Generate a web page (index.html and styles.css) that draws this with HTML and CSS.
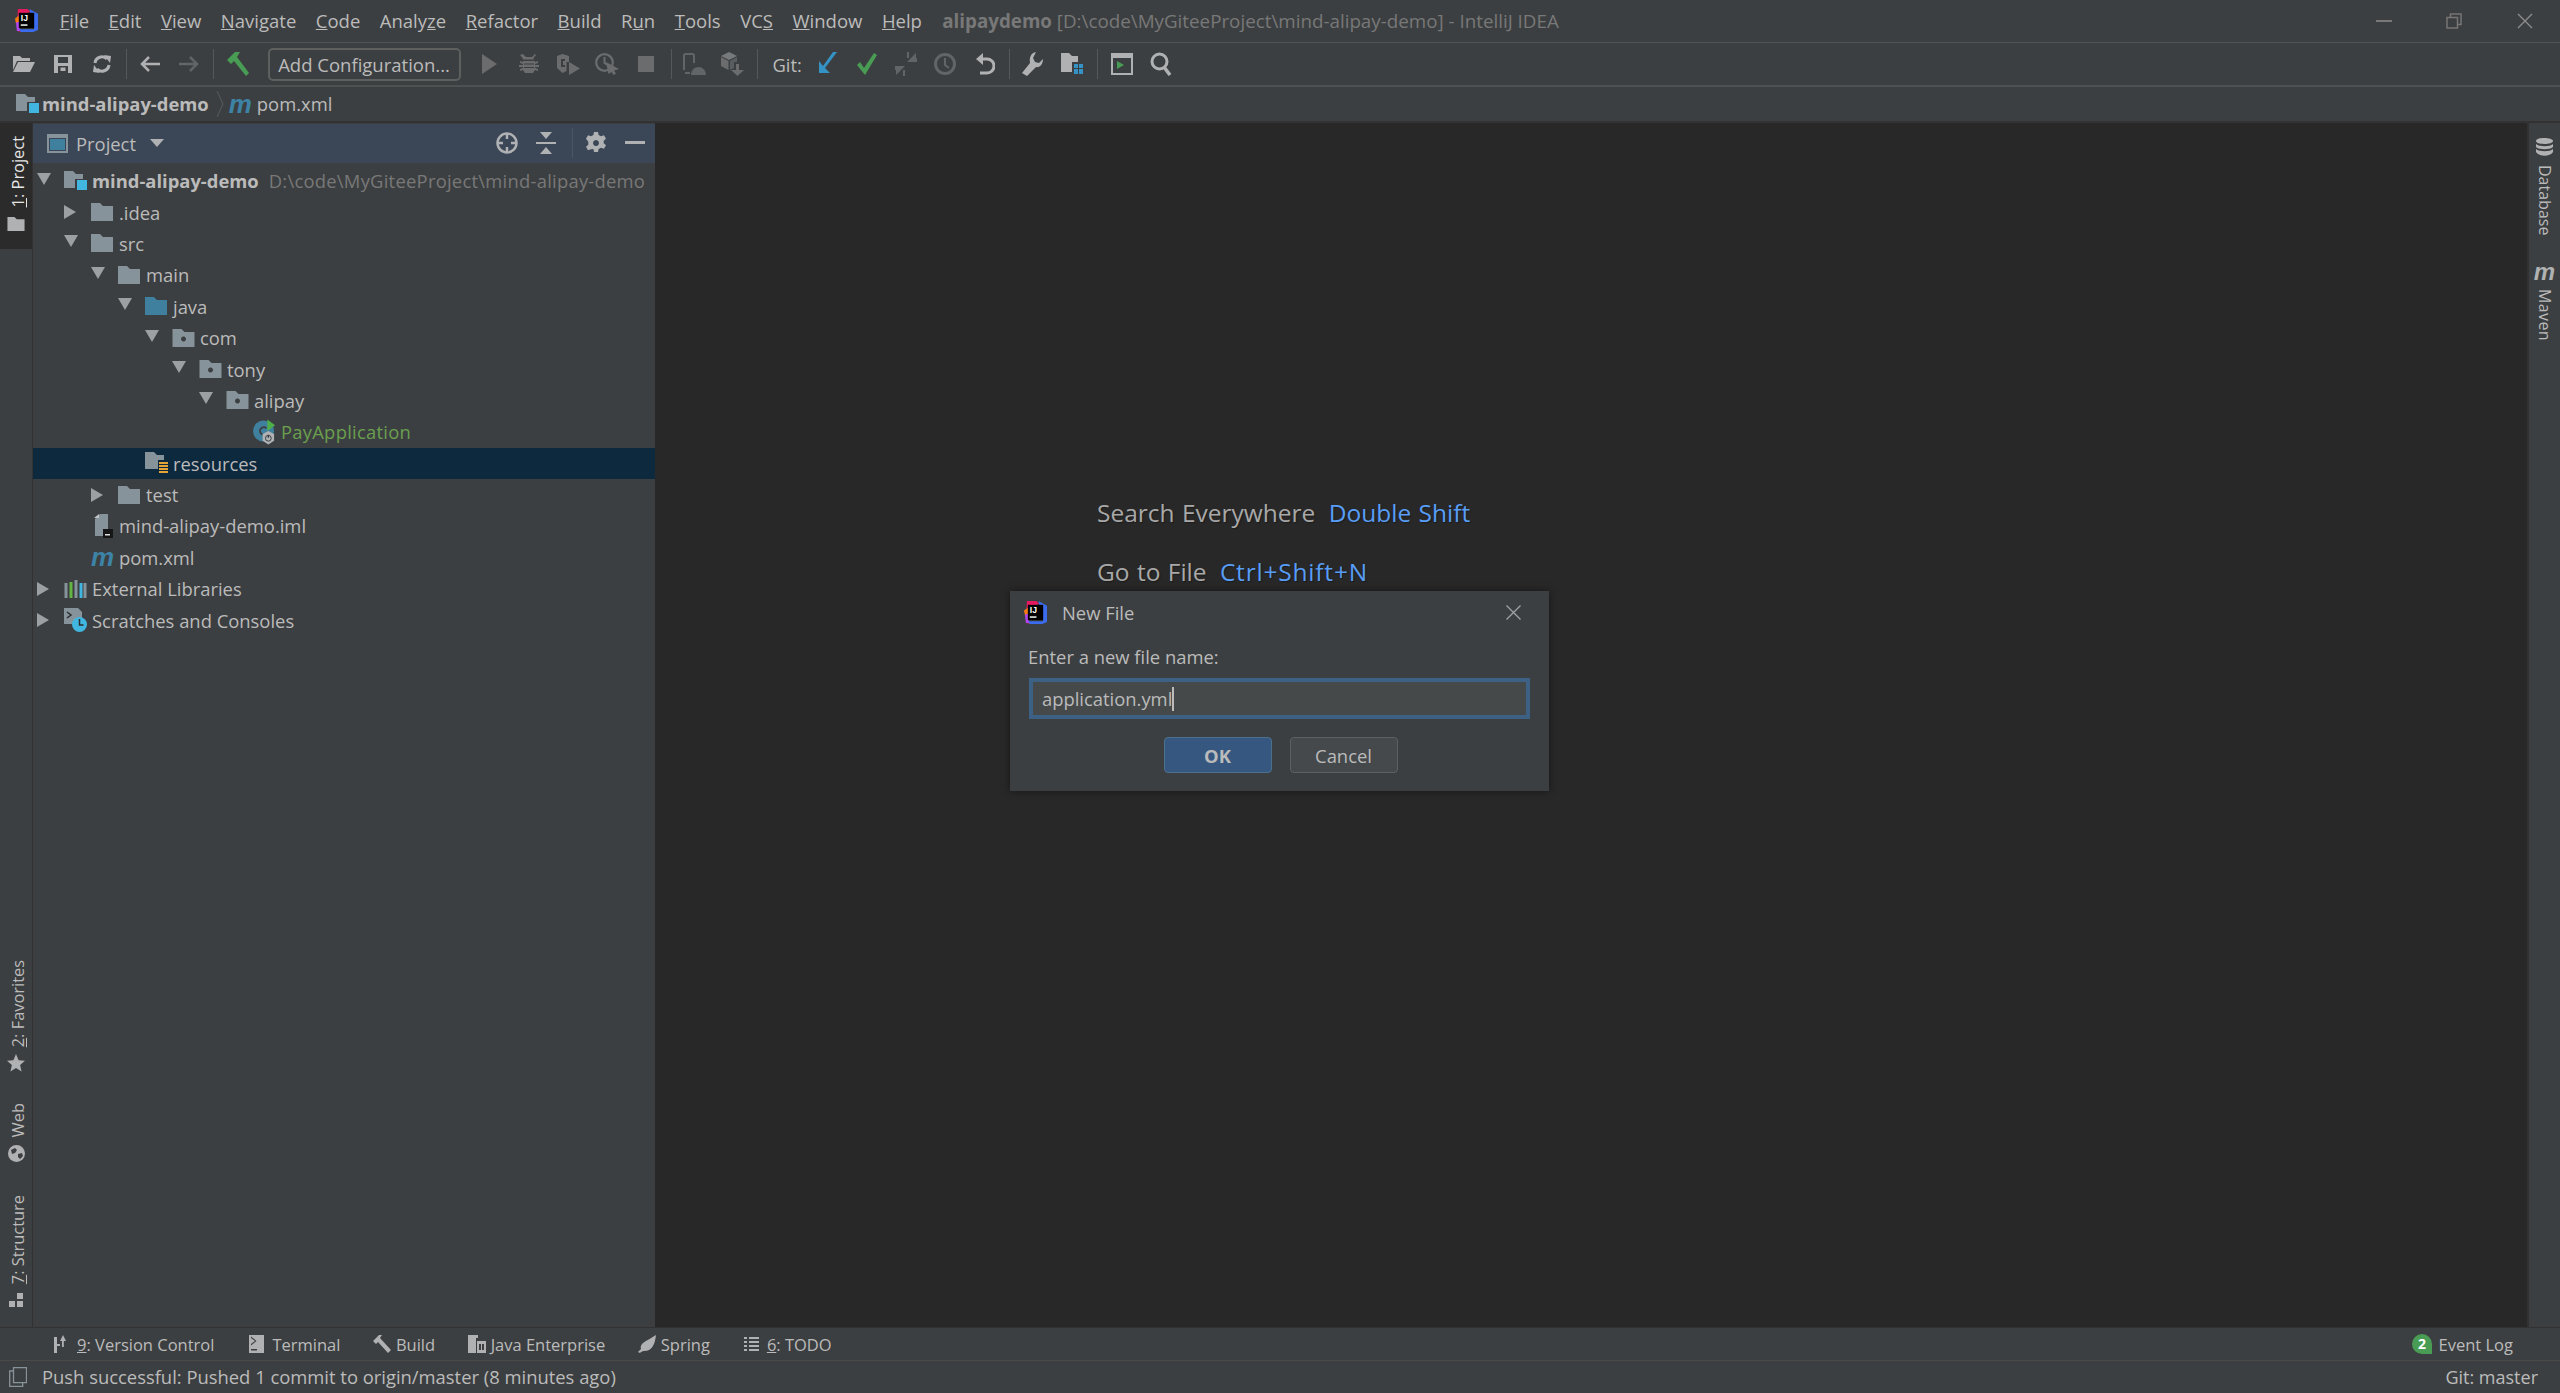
FILE: index.html
```html
<!DOCTYPE html>
<html lang="en">

<head>
    <meta charset="UTF-8">
    <title>alipaydemo - IntelliJ IDEA</title>
    <link rel="stylesheet" href="styles.css">
</head>

<body>
    <!-- Shared icons -->
    <svg class="sprite" aria-hidden="true">
        <symbol id="logo" viewBox="0 0 24 24">
            <path d="M3 0h10l3 3-6 2-5 15 2 4-5-1z" fill="#e5195f"/>
            <path d="M0 10l4-3 2 7-5 1z" fill="#f97a12"/>
            <path d="M1 14l5-1-1 10h-3z" fill="#b345f1"/>
            <path d="M15 0l9 5v17l-5 2H6l-2-3h16z" fill="#3b6cf0"/>
            <rect x="4" y="4" width="16" height="16" fill="#000"/>
            <text x="6" y="13" class="logo-text">IJ</text>
            <rect x="6" y="16" width="7" height="1.5" fill="#fff"/>
        </symbol>
        <symbol id="folder" viewBox="0 0 22 18">
            <path d="M0 0h9l3 3h10v15H0z" fill="currentColor"/>
        </symbol>
        <symbol id="package" viewBox="0 0 22 18">
            <path fill-rule="evenodd" d="M0 0h9l3 3h10v15H0zM11 7.5a2.5 2.5 0 1 0 .01 0z" fill="#87939a"/>
        </symbol>
        <symbol id="module" viewBox="0 0 23 19">
            <path d="M0 0h9l3 3h7v5h-8v9H0z" fill="#87939a"/>
            <rect x="13" y="9" width="10" height="10" fill="#40b6e0"/>
        </symbol>
    </svg>

    <div class="app">
        <!-- Title bar -->
        <div class="titlebar">
            <svg class="logo-ico"><use href="#logo"/></svg>
            <nav class="menu">
                <span><u>F</u>ile</span>
                <span><u>E</u>dit</span>
                <span><u>V</u>iew</span>
                <span><u>N</u>avigate</span>
                <span><u>C</u>ode</span>
                <span>Analy<u>z</u>e</span>
                <span><u>R</u>efactor</span>
                <span><u>B</u>uild</span>
                <span>R<u>u</u>n</span>
                <span><u>T</u>ools</span>
                <span>VC<u>S</u></span>
                <span><u>W</u>indow</span>
                <span><u>H</u>elp</span>
            </nav>
            <div class="wintitle"><b>alipaydemo</b> [D:\code\MyGiteeProject\mind-alipay-demo] - IntelliJ IDEA</div>
            <div class="winctl">
                <svg width="16" height="16" viewBox="0 0 16 16" class="w-min"><path d="M0 8h16" stroke="#8c8c8c" stroke-width="1.5"/></svg>
                <svg width="16" height="16" viewBox="0 0 16 16" class="w-max"><path d="M1 4.5h10.5V15H1zM4.5 4V1H15v10.500h-3" fill="none" stroke="#767676" stroke-width="1.5"/></svg>
                <svg width="16" height="16" viewBox="0 0 16 16" class="w-close"><path d="M1 1l14 14M15 1L1 15" stroke="#8c8c8c" stroke-width="1.400"/></svg>
            </div>
        </div>

        <!-- Main toolbar -->
        <div class="toolbar">
            <span class="tb"><svg width="22" height="16" viewBox="0 0 22 16"><path d="M0 0h7l2 2h8v3H4L0 14z" fill="#afb1b3"/><path d="M5 6h17l-5 10H0z" fill="#afb1b3"/></svg></span>
            <span class="tb"><svg width="18" height="18" viewBox="0 0 18 18"><path fill-rule="evenodd" d="M0 0h18v18H0zM4 2v6h10V2zM4 11v7h10v-7zM6.500 12.500h5V16h-5z" fill="#afb1b3"/></svg></span>
            <span class="tb"><svg width="20" height="20" viewBox="0 0 20 20"><path d="M3 9a7 7 0 0 1 12-4M17 11a7 7 0 0 1-12 4" fill="none" stroke="#afb1b3" stroke-width="3"/><path d="M12 1l7 1-1 7zM8 19l-7-1 1-7z" fill="#afb1b3"/></svg></span>
            <span class="sep"></span>
            <span class="tb"><svg width="20" height="16" viewBox="0 0 20 16"><path d="M20 8H3M9 1L2 8l7 7" fill="none" stroke="#afb1b3" stroke-width="2.500"/></svg></span>
            <span class="tb"><svg width="20" height="16" viewBox="0 0 20 16"><path d="M0 8h17M11 1l7 7-7 7" fill="none" stroke="#626567" stroke-width="2.500"/></svg></span>
            <span class="sep"></span>
            <span class="tb hammer"><svg width="24" height="26" viewBox="0 0 24 26"><path d="M1 9l8-8 5 0-3 5 12 16-3 3L8 10l-3 3z" fill="#499c54"/></svg></span>
            <span class="cfg-btn">Add Configuration...</span>
            <span class="tb run"><svg width="15" height="20" viewBox="0 0 15 20"><path d="M0 0l15 10L0 20z" fill="#6a6c6e"/></svg></span>
            <span class="tb"><svg width="20" height="20" viewBox="0 0 20 20"><path d="M4 0l3 3h6l3-3 1 1-2.500 3 .5 1.500H4L3.500 4 1 1z" fill="#6a6c6e"/><path d="M4 7h12v1l3-1v2l-3 1v1h4v2h-4v1l3 1v2l-3-1-2 3H6l-2-3-3 1v-2l3-1v-1H0v-2h4v-1L1 9V7l3 1zM5 9.500v1h10v-1zM5 13v1h10v-1z" fill="#6a6c6e" fill-rule="evenodd"/></svg></span>
            <span class="tb"><svg width="23" height="21" viewBox="0 0 23 21"><path d="M0 2l5.500-2L12 2v6H9.500v9l-4 2L0 14z" fill="#6a6c6e"/><path d="M4 5h4v2H6v4h2v2H4z" fill="#3c3f41"/><path d="M12 8l11 6.500L12 21z" fill="#6a6c6e"/></svg></span>
            <span class="tb"><svg width="24" height="23" viewBox="0 0 24 23"><circle cx="9.500" cy="9.500" r="8.300" fill="none" stroke="#6a6c6e" stroke-width="2.200"/><path d="M9.500 4v6l3 2" fill="none" stroke="#6a6c6e" stroke-width="2"/><path d="M11 9l13 7-5 1.500 2 3-2.500 1.500-2-3-3 2z" fill="#6a6c6e"/></svg></span>
            <span class="tb"><svg width="16" height="16" viewBox="0 0 16 16"><rect width="16" height="16" fill="#6a6c6e"/></svg></span>
            <span class="sep"></span>
            <span class="tb"><svg width="24" height="22" viewBox="0 0 24 22"><path d="M2 17V2.500C2 1.500 2.500 1 3.500 1h7c1 0 1.500.5 1.500 1.500V10" fill="none" stroke="#626567" stroke-width="2"/><path d="M3 20h5" stroke="#626567" stroke-width="2"/><path d="M9 22a7.500 8 0 0 1 15 0z" fill="#626567"/></svg></span>
            <span class="tb"><svg width="24" height="24" viewBox="0 0 24 24"><path d="M8 0l8 4-8 4-8-4z" fill="#777a7c"/><path d="M0 5l7.500 4v9L0 14z" fill="#6a6c6e"/><path d="M9 9l7-4v5h-3v6l-4 2z" fill="#5a5d5f"/><path d="M15 12h3v6h5l-6.500 6L10 18h5z" fill="#6a6c6e"/></svg></span>
            <span class="sep"></span>
            <span class="git-label">Git:</span>
            <span class="tb"><svg width="18" height="24" viewBox="0 0 18 24"><path d="M18 0L6 16l5 5H0V9l4 5L14 0z" fill="#3592c4"/></svg></span>
            <span class="tb"><svg width="20" height="22" viewBox="0 0 20 22"><path d="M0 12l3-3 4 6L17 0l3 2L8 22z" fill="#499c54"/></svg></span>
            <span class="tb"><svg width="22" height="24" viewBox="0 0 22 24"><path d="M12 10l9-9v5h1v4zM10 14l-9 9v-5H0v-4z" fill="#626567"/><path d="M13 0v6M9 18v6" stroke="#626567" stroke-width="2"/></svg></span>
            <span class="tb"><svg width="22" height="22" viewBox="0 0 22 22"><circle cx="11" cy="11" r="9.500" fill="none" stroke="#626567" stroke-width="3"/><path d="M11 5v7l4 3" fill="none" stroke="#626567" stroke-width="2"/></svg></span>
            <span class="tb"><svg width="20" height="22" viewBox="0 0 20 22"><path d="M5 6h7a6.500 6.500 0 0 1 0 14H5" fill="none" stroke="#afb1b3" stroke-width="3"/><path d="M8 0L1 6l7 6z" fill="#afb1b3"/></svg></span>
            <span class="sep"></span>
            <span class="tb"><svg width="22" height="24" viewBox="0 0 22 24"><path d="M15 0l-3 6 2 4 4 1 4-4c0 5-3 9-7 8L6 24l-5-3 8-10C8 5 10 1 15 0z" fill="#afb1b3"/></svg></span>
            <span class="tb"><svg width="22" height="22" viewBox="0 0 22 22"><path d="M0 0h8l3 3h6v6h-6v10H0z" fill="#afb1b3"/><path d="M13 11h4v4h-4zM18 11h4v4h-4zM13 16h4v5h-4zM18 16h4v5h-4z" fill="#3592c4"/></svg></span>
            <span class="sep sep-last"></span>
            <span class="tb"><svg width="22" height="22" viewBox="0 0 22 22"><path fill-rule="evenodd" d="M0 0h22v22H0zM2 5v15h18V5z" fill="#afb1b3"/><path d="M6 8l7 4-7 4z" fill="#499c54"/></svg></span>
            <span class="tb"><svg width="22" height="24" viewBox="0 0 22 24"><circle cx="9.500" cy="9.500" r="7.500" fill="none" stroke="#afb1b3" stroke-width="3"/><path d="M14 15l6 8" stroke="#afb1b3" stroke-width="3.500"/></svg></span>
        </div>

        <!-- Breadcrumbs -->
        <div class="navbar">
            <svg class="crumb-ico" width="23" height="19"><use href="#module"/></svg>
            <b>mind-alipay-demo</b>
            <svg class="crumb-sep" width="8" height="26" viewBox="0 0 8 26"><path d="M1 0l6 13-6 13" fill="none" stroke="#555" stroke-width="1.200"/></svg>
            <span class="maven-m crumb-m">m</span>
            <span class="crumb-file">pom.xml</span>
        </div>

        <div class="main">
            <!-- Left tool strip -->
            <aside class="strip-left">
                <div class="vtab vtab-active">
                    <svg width="18" height="14" viewBox="0 0 22 18"><path d="M0 0h9l3 3h10v15H0z" fill="#afb1b3"/></svg>
                    <span class="vtext"><u>1</u>: Project</span>
                </div>
                <div class="strip-bottom">
                    <div class="vtab fav">
                        <svg width="18" height="18" viewBox="0 0 18 18"><path d="M9 0l2.600 6.200 6.400.5-4.900 4.200 1.500 6.600L9 14l-5.600 3.500 1.500-6.600L0 6.700l6.400-.5z" fill="#afb1b3"/></svg>
                        <span class="vtext"><u>2</u>: Favorites</span>
                    </div>
                    <div class="vtab web">
                        <svg width="17" height="17" viewBox="0 0 17 17"><circle cx="8.500" cy="8.500" r="8.500" fill="#afb1b3"/><path d="M3 5l4-2 2 2-2 3-3 1zM10 9l4-1 1 3-3 3-2-2z" fill="#3c3f41"/></svg>
                        <span class="vtext">Web</span>
                    </div>
                    <div class="vtab struct">
                        <svg width="14" height="14" viewBox="0 0 14 14"><path d="M8 0h6v6H8zM0 8h6v6H0zM8 8h6v6H8z" fill="#afb1b3"/></svg>
                        <span class="vtext"><u>7</u>: Structure</span>
                    </div>
                </div>
            </aside>

            <!-- Project tool window -->
            <section class="project">
                <header class="project-head">
                    <svg width="21" height="19" viewBox="0 0 21 19"><path fill-rule="evenodd" d="M0 0h21v19H0zM2 4v13h17V4z" fill="#87939a"/><rect x="3" y="5" width="15" height="11" fill="#40809f"/></svg>
                    <span class="project-name">Project</span>
                    <span class="head-arrow"></span>
                    <div class="head-tools">
                        <span class="hd"><svg width="22" height="22" viewBox="0 0 22 22"><circle cx="11" cy="11" r="9.500" fill="none" stroke="#afb1b3" stroke-width="2.500"/><path d="M11 1v6M11 15v6M1 11h6M15 11h6" stroke="#afb1b3" stroke-width="2.500"/></svg></span>
                        <span class="hd"><svg width="20" height="22" viewBox="0 0 20 22"><path d="M0 11h20" stroke="#afb1b3" stroke-width="2"/><path d="M4 0h12l-6 7zM4 22h12l-6-7z" fill="#afb1b3"/></svg></span>
                        <span class="sep head-sep"></span>
                        <span class="hd"><svg width="20" height="22" viewBox="0 0 20 22"><path fill-rule="evenodd" d="M8 0h4l.6 3 2.400 1.300 3-1 2 3.500-2.300 2v2.400l2.300 2-2 3.500-3-1-2.400 1.300-.6 3H8l-.6-3L5 17.200l-3 1-2-3.500 2.300-2V9.800L0 6.800l2-3.500 3 1L7.400 3zM10 8a3 3 0 1 0 .01 0z" fill="#afb1b3"/></svg></span>
                        <span class="hd"><svg width="20" height="4" viewBox="0 0 20 4"><rect width="20" height="3" fill="#afb1b3"/></svg></span>
                    </div>
                </header>
                <div class="tree">
                    <div class="row lv0"><i class="arr-down"></i><svg class="ti" width="23" height="19"><use href="#module"/></svg><b>mind-alipay-demo</b><span class="path">D:\code\MyGiteeProject\mind-alipay-demo</span></div>
                    <div class="row lv1"><i class="arr-right"></i><svg class="ti fld" width="22" height="18"><use href="#folder"/></svg>.idea</div>
                    <div class="row lv1"><i class="arr-down"></i><svg class="ti fld" width="22" height="18"><use href="#folder"/></svg>src</div>
                    <div class="row lv2"><i class="arr-down"></i><svg class="ti fld" width="22" height="18"><use href="#folder"/></svg>main</div>
                    <div class="row lv3"><i class="arr-down"></i><svg class="ti fld-blue" width="22" height="18"><use href="#folder"/></svg>java</div>
                    <div class="row lv4"><i class="arr-down"></i><svg class="ti" width="22" height="18"><use href="#package"/></svg>com</div>
                    <div class="row lv5"><i class="arr-down"></i><svg class="ti" width="22" height="18"><use href="#package"/></svg>tony</div>
                    <div class="row lv6"><i class="arr-down"></i><svg class="ti" width="22" height="18"><use href="#package"/></svg>alipay</div>
                    <div class="row lv7 run-class"><i class="arr-none"></i>
                        <svg class="ti" width="24" height="26" viewBox="0 0 24 26"><circle cx="11" cy="12" r="11" fill="#40809f"/><path d="M14 9a4 4 0 1 0 0 6" fill="none" stroke="#3c3f41" stroke-width="2"/><path d="M15 0l8 6-8 6z" fill="#4fb04a"/><path d="M16 12l6 3v7l-6 4-6-4v-7z" fill="#afb1b3"/><path d="M16 16v3" stroke="#3c3f41" stroke-width="1.500"/><circle cx="16" cy="19.500" r="3" fill="none" stroke="#3c3f41" stroke-width="1"/></svg>PayApplication</div>
                    <div class="row lv3 selected"><i class="arr-none"></i>
                        <svg class="ti" width="23" height="22" viewBox="0 0 23 22"><path d="M0 0h9l3 3h7v5h-6v9H0z" fill="#87939a"/><path d="M14 10h9v2h-9zM14 13h9v2h-9zM14 16h9v2h-9zM14 19h9v2h-9z" fill="#e5a235"/></svg>resources</div>
                    <div class="row lv2"><i class="arr-right"></i><svg class="ti fld" width="22" height="18"><use href="#folder"/></svg>test</div>
                    <div class="row lv1"><i class="arr-none"></i>
                        <svg class="ti iml" width="21" height="24" viewBox="0 0 21 24"><path d="M8 0h8v15h-5v7H3V5z" fill="#87939a"/><path d="M2 4l5-4v4z" fill="#c0c4c6"/><rect x="11" y="15" width="10" height="9" fill="#161616"/><rect x="13" y="20" width="5" height="1.500" fill="#ddd"/></svg>mind-alipay-demo.iml</div>
                    <div class="row lv1"><i class="arr-none"></i><span class="maven-m ti">m</span>pom.xml</div>
                    <div class="row lv0"><i class="arr-right"></i>
                        <svg class="ti" width="22" height="18" viewBox="0 0 22 18"><path d="M0 3h3v15H0zM19 3h3v15h-3z" fill="#87939a"/><path d="M5 2h3v16H5z" fill="#62b543"/><path d="M10 0h3v18h-3z" fill="#87939a"/><path d="M15 3h3v15h-3z" fill="#40b6e0"/></svg>External Libraries</div>
                    <div class="row lv0"><i class="arr-right"></i>
                        <svg class="ti" width="23" height="24" viewBox="0 0 23 24"><path d="M0 0h14l4 4v6h-6v6H0z" fill="#87939a"/><path d="M3 4l4 3-4 3" fill="none" stroke="#2b2d2e" stroke-width="1.500"/><circle cx="15.500" cy="16.500" r="7.500" fill="#40b6e0"/><path d="M15.500 11v6h4" fill="none" stroke="#2b2d2e" stroke-width="1.500"/></svg>Scratches and Consoles</div>
                </div>
            </section>

            <!-- Editor with empty state hints -->
            <section class="editor">
                <p class="hint">Search Everywhere <span class="key">Double Shift</span></p>
                <p class="hint">Go to File <span class="key key-wide">Ctrl+Shift+N</span></p>
            </section>

            <!-- Right tool strip -->
            <aside class="strip-right">
                <div class="rtab db">
                    <svg width="17" height="18" viewBox="0 0 17 18"><path d="M0 3c0-4 17-4 17 0s-17 4-17 0zM0 6c3 3 14 3 17 0v3c-3 3-14 3-17 0zM0 11c3 3 14 3 17 0v3c-3 5-14 5-17 0z" fill="#afb1b3"/></svg>
                    <span class="rtext">Database</span>
                </div>
                <div class="rtab mv">
                    <span class="maven-m maven-grey">m</span>
                    <span class="rtext">Maven</span>
                </div>
            </aside>
        </div>

        <!-- Bottom tool windows -->
        <div class="toolwins">
            <span class="tw tw-vc"><i class="tw-ico"><svg width="12" height="18" viewBox="0 0 12 18"><path d="M0 2h3v16H0zM3 11h3v-2H3z" fill="#afb1b3"/><path d="M9 0l3 6H9.800v6H8V6H6z" fill="#afb1b3"/></svg></i><span><u>9</u>: Version Control</span></span>
            <span class="tw"><i class="tw-ico"><svg width="15" height="18" viewBox="0 0 15 18"><path fill-rule="evenodd" d="M0 0h15v18H0zM2 3l4 3-4 3v1.500L7.500 6 2 1.500zM2 14v1.500h6V14z" fill="#afb1b3"/></svg></i>Terminal</span>
            <span class="tw"><i class="tw-ico"><svg width="18" height="18" viewBox="0 0 18 18"><path d="M0 6l6-6h3L7 3l11 12-3 3L5 7 3 9z" fill="#afb1b3"/></svg></i>Build</span>
            <span class="tw"><i class="tw-ico"><svg width="18" height="18" viewBox="0 0 18 18"><path d="M0 0h10v3H8v15H0z" fill="#afb1b3"/><path fill-rule="evenodd" d="M9 6h9v12H9zM11 9v6h2V9zM14 9v6h2V9z" fill="#afb1b3"/></svg></i>Java Enterprise</span>
            <span class="tw"><i class="tw-ico"><svg width="18" height="18" viewBox="0 0 18 18"><path d="M18 0C17 8 15 16 6 16c-2 0-3 1-4 2l-2-1 3-3C1 8 9 6 18 0z" fill="#afb1b3"/></svg></i>Spring</span>
            <span class="tw tw-todo"><i class="tw-ico"><svg width="15" height="14" viewBox="0 0 15 14"><path d="M0 0h3v2H0zM5 0h10v2H5zM0 4h3v2H0zM5 4h10v2H5zM0 8h3v2H0zM5 8h10v2H5zM0 12h3v2H0zM5 12h10v2H5z" fill="#afb1b3"/></svg></i><span><u>6</u>: TODO</span></span>
            <span class="tw event-log"><svg class="badge" width="20" height="20" viewBox="0 0 20 20"><path d="M10 0a10 10 0 0 1 10 10v10H10A10 10 0 0 1 10 0z" fill="#499c54"/><text x="10" y="15" class="badge-text">2</text></svg>Event Log</span>
        </div>

        <!-- Status bar -->
        <div class="statusbar">
            <svg width="18" height="20" viewBox="0 0 18 20"><path d="M4.500.7h13v15h-13zM4 4H.7v15.300h13V16" fill="none" stroke="#87939a" stroke-width="1.300"/></svg>
            <span class="status-text">Push successful: Pushed 1 commit to origin/master (8 minutes ago)</span>
            <span class="status-git">Git: master</span>
        </div>

        <!-- New File dialog -->
        <div class="dialog">
            <div class="dialog-title">
                <svg class="dialog-logo" width="23" height="23"><use href="#logo"/></svg>
                <span>New File</span>
                <svg class="dialog-close" width="15" height="15" viewBox="0 0 15 15"><path d="M.5.500l14 14M14.500.500l-14 14" stroke="#a0a2a4" stroke-width="1.300"/></svg>
            </div>
            <label class="dialog-label">Enter a new file name:</label>
            <div class="dialog-input">application.yml<span class="caret"></span></div>
            <div class="dialog-btns">
                <button class="btn btn-ok" type="button">OK</button>
                <button class="btn" type="button">Cancel</button>
            </div>
        </div>
    </div>
</body>

</html>
```

FILE: styles.css
```css
/* Basic page setup */
html,
body {
    margin: 0;
    padding: 0;
    height: 100%;
    overflow: hidden;
}

body {
    font-family: "Open Sans", "Noto Sans", sans-serif;
    font-size: 18.400px;
    color: #bbbbbb;
    background-color: #3c3f41;
}

svg {
    display: block;
    flex: none;
}

.sprite {
    display: none;
}

.logo-text {
    font-family: "Liberation Sans", sans-serif;
    font-weight: bold;
    font-size: 9px;
    fill: #fff;
}

.badge-text {
    font-family: "Open Sans", sans-serif;
    font-weight: bold;
    font-size: 14px;
    fill: #fff;
    text-anchor: middle;
}

.app {
    position: relative;
    display: flex;
    flex-direction: column;
    height: 1393px;
}

/* Title bar */
.titlebar {
    display: flex;
    align-items: center;
    height: 41px;
    flex: none;
    border-bottom: 1px solid #515355;
    padding: 0 0 1px 15px;
}

.logo-ico {
    width: 23px;
    height: 23px;
}

.menu {
    display: flex;
    margin-left: 12px;
    font-size: 18.500px;
}

.menu span {
    padding: 0 9.750px;
    white-space: nowrap;
}

.wintitle {
    margin-left: 10.500px;
    color: #787878;
    font-size: 18.800px;
    white-space: nowrap;
}

.winctl {
    margin-left: auto;
    display: flex;
    align-items: center;
}

.w-min {
    margin-right: 54px;
}

.w-max {
    margin-right: 55px;
}

.w-close {
    margin-right: 27px;
}

/* Toolbar */
.toolbar {
    display: flex;
    align-items: center;
    height: 42px;
    flex: none;
    padding-left: 4px;
    border-bottom: 2px solid #4e5052;
}

.tb {
    display: flex;
    align-items: center;
    justify-content: center;
    width: 39.200px;
    height: 40px;
    flex: none;
}

.sep {
    width: 1px;
    height: 30px;
    background-color: #555759;
    margin: 0 3px 0 4.500px;
    flex: none;
}

.sep-last {
    margin: 0 4px 0 6px;
}

.hammer {
    margin-left: 1.400px;
}

.cfg-btn {
    display: flex;
    align-items: center;
    justify-content: center;
    width: 193px;
    height: 33px;
    box-sizing: border-box;
    margin-left: 10px;
    border: 2px solid #5e6060;
    border-radius: 5px;
    white-space: nowrap;
    font-size: 18.500px;
}

.run {
    margin-left: 9.600px;
}

.git-label {
    margin: 0 6.500px 0 11px;
}

/* Breadcrumbs */
.navbar {
    display: flex;
    align-items: center;
    height: 33px;
    flex: none;
    padding: 0 0 1px 16px;
}

.crumb-ico {
    margin-right: 3px;
}

.crumb-sep {
    margin: 0 5px 0 7px;
}

.crumb-m {
    margin-right: 5px;
}

.maven-m {
    font-family: "Liberation Sans", sans-serif;
    font-weight: bold;
    font-style: italic;
    font-size: 26px;
    line-height: 20px;
    color: #3d83a6;
}

/* Main area */
.main {
    flex: 1;
    display: flex;
    min-height: 0;
    border-top: 2px solid #323232;
    border-bottom: 1px solid #323232;
}

.strip-left {
    width: 32px;
    flex: none;
    display: flex;
    flex-direction: column;
    border-right: 1px solid #323232;
}

.vtab {
    display: flex;
    flex-direction: column-reverse;
    align-items: center;
    font-size: 16.400px;
}

.vtext {
    writing-mode: vertical-rl;
    transform: rotate(180deg);
    line-height: 20px;
    margin-left: 3px;
    white-space: nowrap;
}

.vtab-active {
    height: 126px;
    box-sizing: border-box;
    padding-bottom: 18px;
    justify-content: flex-start;
    background-color: #2b2b2b;
    color: #e6e6e6;
}

.vtab-active .vtext {
    margin-bottom: 10px;
}

.strip-bottom {
    margin-top: auto;
    padding-bottom: 20px;
}

.fav .vtext,
.web .vtext {
    margin-bottom: 7px;
}

.struct .vtext {
    margin-bottom: 9px;
}

.web {
    margin-top: 31px;
}

.struct {
    margin-top: 33px;
}

/* Project tool window */
.project {
    width: 622px;
    flex: none;
    display: flex;
    flex-direction: column;
    padding-top: 1px;
    box-sizing: border-box;
}

.project-head {
    display: flex;
    align-items: center;
    height: 38px;
    flex: none;
    padding: 0 0 1px 14px;
    background-color: #3b4757;
}

.project-name {
    margin-left: 8px;
}

.head-arrow {
    width: 0;
    height: 0;
    margin-left: 14px;
    border-left: 7px solid transparent;
    border-right: 7px solid transparent;
    border-top: 8px solid #afb1b3;
}

.head-tools {
    margin-left: auto;
    display: flex;
    align-items: center;
}

.hd {
    display: flex;
    align-items: center;
    justify-content: center;
    width: 39.200px;
    height: 36px;
}

.head-sep {
    margin: 0 4px 0 6px;
    background-color: #4b5665;
}

.tree {
    padding-top: 2px;
}

.row {
    display: flex;
    align-items: center;
    height: 31.400px;
    white-space: nowrap;
}

.lv0 { padding-left: 4px; }
.lv1 { padding-left: 31px; }
.lv2 { padding-left: 58px; }
.lv3 { padding-left: 85px; }
.lv4 { padding-left: 112px; }
.lv5 { padding-left: 139px; }
.lv6 { padding-left: 166px; }
.lv7 { padding-left: 193px; }

.selected {
    background-color: #0d293e;
}

.run-class {
    color: #6a9f4f;
    letter-spacing: 0.250px;
}

.path {
    margin-left: 10px;
    color: #787878;
    letter-spacing: 0.250px;
}

/* Arrow box is 27px, icon box is 28px */
.arr-down,
.arr-right,
.arr-none {
    width: 27px;
    flex: none;
    display: block;
    box-sizing: border-box;
}

.arr-down {
    width: 14px;
    margin-right: 13px;
    height: 0;
    margin-top: -4px;
    border-left: 7px solid transparent;
    border-right: 7px solid transparent;
    border-top: 12px solid #9da0a2;
}

.arr-right {
    width: 12px;
    margin-right: 15px;
    height: 0;
    border-top: 7px solid transparent;
    border-bottom: 7px solid transparent;
    border-left: 12px solid #9da0a2;
}

.ti {
    width: 23px;
    margin-right: 5px;
    flex: none;
}

.ti.fld,
.ti.fld-blue {
    width: 22px;
    margin-right: 6px;
}

.fld {
    color: #87939a;
}

.fld-blue {
    color: #40809f;
}

/* Editor */
.editor {
    flex: 1;
    background-color: #282828;
    padding: 371px 0 0 442px;
    box-sizing: border-box;
}

.hint {
    margin: 0 0 22px;
    height: 37px;
    line-height: 37px;
    font-size: 24.500px;
    color: #a8a8a8;
    text-shadow: 1px 1px 1px #1c1c1c;
    word-spacing: 1px;
}

.key {
    margin-left: 6px;
    color: #589df6;
}

.key-wide {
    letter-spacing: 0.800px;
}

.strip-right {
    width: 31px;
    flex: none;
    border-left: 2px solid #323232;
    display: flex;
    flex-direction: column;
    align-items: center;
    padding-top: 15px;
    font-size: 16px;
}

.rtab {
    display: flex;
    flex-direction: column;
    align-items: center;
}

.rtext {
    writing-mode: vertical-rl;
    line-height: 20px;
    margin-top: 9px;
    white-space: nowrap;
}

.mv {
    margin-top: 30px;
}

.mv .rtext {
    margin-top: 10px;
    letter-spacing: 0.400px;
}

.maven-grey {
    color: #afb1b3;
    font-size: 24px;
    line-height: 14px;
}

/* Bottom tool windows */
.toolwins {
    display: flex;
    align-items: center;
    height: 32px;
    flex: none;
    padding-left: 54px;
    font-size: 16.500px;
    border-bottom: 1px solid #4a4a48;
}

.tw {
    display: flex;
    align-items: center;
    margin-right: 32.500px;
    white-space: nowrap;
}

.tw-vc {
    margin-right: 35px;
}

.tw-todo {
    margin-left: 1.500px;
}

.tw-ico {
    display: block;
    width: 18px;
    margin-right: 5px;
    flex: none;
}

.event-log {
    margin-left: auto;
    margin-right: 47px;
}

.badge {
    margin-right: 7px;
}

/* Status bar */
.statusbar {
    display: flex;
    align-items: center;
    height: 31px;
    flex: none;
    padding: 0 0 1px 9px;
}

.status-text {
    margin-left: 15px;
    white-space: nowrap;
}

.status-git {
    margin-left: auto;
    margin-right: 22px;
    font-size: 18px;
}

/* Dialog */
.dialog {
    position: absolute;
    left: 1010px;
    top: 591px;
    width: 539px;
    height: 200px;
    background-color: #3c3f41;
    box-shadow: 0 0 8px rgba(0, 0, 0, 0.45);
    padding: 0 18px;
    box-sizing: border-box;
}

.dialog-title {
    display: flex;
    align-items: center;
    height: 42px;
    margin-left: -4px;
}

.dialog-logo {
    margin-right: 15px;
}

.dialog-close {
    margin-left: auto;
    margin-right: 10px;
}

.dialog-label {
    display: block;
    margin-top: 10px;
    margin-bottom: 7px;
    line-height: 28px;
}

.dialog-input {
    display: flex;
    align-items: center;
    width: 501px;
    height: 41px;
    margin: 0 0 0 1px;
    box-sizing: border-box;
    padding-left: 9px;
    border: 4px solid #3d6185;
    background-color: #45494a;
}

.caret {
    width: 2px;
    height: 24px;
    background-color: #bbbbbb;
}

.dialog-btns {
    display: flex;
    justify-content: center;
    gap: 18px;
    margin-top: 18px;
    margin-left: 2px;
}

.btn {
    width: 108px;
    height: 36px;
    font-family: inherit;
    font-size: 18.400px;
    color: #bbbbbb;
    background-color: #45494b;
    border: 1.500px solid #5e6060;
    border-radius: 4px;
    padding: 0;
}

.btn-ok {
    font-weight: bold;
    background-color: #365880;
    border-color: #4c708c;
}
```
